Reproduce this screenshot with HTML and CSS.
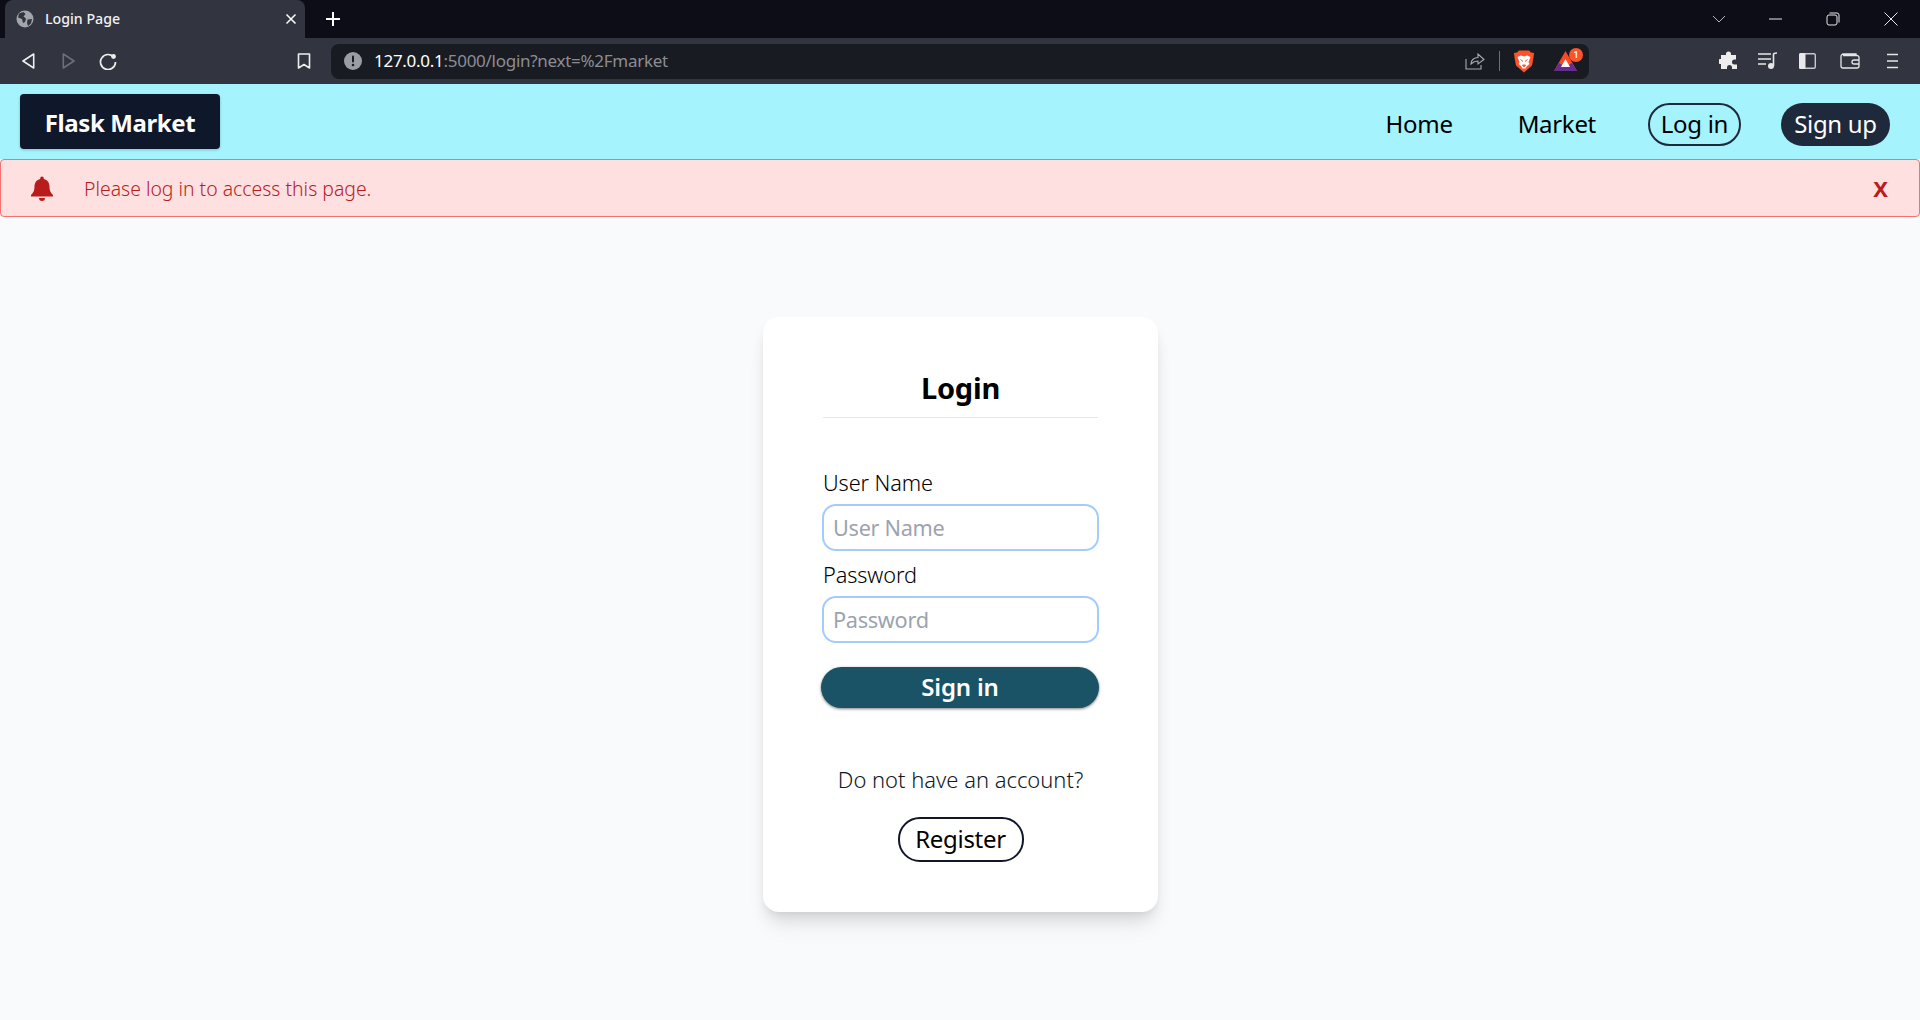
FILE: index.html
```html
<!DOCTYPE html>
<html lang="en">
<head>
<meta charset="utf-8">
<title>Login Page</title>
<link rel="stylesheet" href="styles.css">
</head>
<body>
<div class="chrome">
  <div class="tabstrip">
    <div class="tab">
      <svg class="tab-globe" width="18" height="18" viewBox="0 0 18 18"><circle cx="9" cy="9" r="8.5" fill="#a3a5ad"/><path d="M3 3.500 7.500 2l2 2-2 2.500 2.500 2-1 3.500-2 1-1-4L2 7.500zM11.500 9.500l4.500-.5-1 4.500-3 2.500-1-3z" fill="#32343f"/></svg>
      <span class="tab-title">Login Page</span>
      <svg class="tab-close" width="12" height="12" viewBox="0 0 12 12"><path d="M1.500 1.500l9 9m0-9-9 9" stroke="#fff" stroke-width="1.500"/></svg>
    </div>
    <svg class="new-tab" width="16" height="16" viewBox="0 0 16 16"><path d="M8 1v14M1 8h14" stroke="#fff" stroke-width="2"/></svg>
    <div class="window-controls">
      <svg class="wc-chevron" width="14" height="8" viewBox="0 0 14 8"><path d="M1 1l6 6 6-6" fill="none" stroke="#b5b6bc" stroke-width="1"/></svg>
      <svg class="wc-min" width="14" height="2" viewBox="0 0 14 2"><path d="M0 1h13" stroke="#e8e8ea" stroke-width="1"/></svg>
      <svg class="wc-max" width="14" height="14" viewBox="0 0 14 14"><rect x="1" y="3" width="10" height="10" rx="2" fill="none" stroke="#e8e8ea"/><path d="M3.500 1H11a2 2 0 0 1 2 2v7.500" fill="none" stroke="#e8e8ea"/></svg>
      <svg class="wc-close" width="14" height="14" viewBox="0 0 14 14"><path d="M.5.5l13 13m0-13-13 13" stroke="#e8e8ea" stroke-width="1"/></svg>
    </div>
  </div>
  <div class="toolbar">
    <svg class="tb-back" width="13" height="16" viewBox="0 0 13 16"><path d="M11.700 1 1 8l10.700 7z" fill="none" stroke="#eee" stroke-width="1.600" stroke-linejoin="round"/></svg>
    <svg class="tb-forward" width="13" height="16" viewBox="0 0 13 16"><path d="M1.300 1 12 8 1.300 15z" fill="none" stroke="#6d6f78" stroke-width="1.600" stroke-linejoin="round"/></svg>
    <svg class="tb-reload" width="18" height="18" viewBox="0 0 18 18"><path d="M15 5.500A7.500 7.500 0 1 0 16.500 10" fill="none" stroke="#eee" stroke-width="1.700"/><circle cx="14.500" cy="4.500" r="2.400" fill="#eee"/></svg>
    <svg class="tb-bookmark" width="14" height="16" viewBox="0 0 14 16"><path d="M1.500 1h11v14L7 11.500 1.500 15z" fill="none" stroke="#eee" stroke-width="1.600" stroke-linejoin="round"/></svg>
    <div class="omnibox">
      <svg class="omni-info" width="18" height="18" viewBox="0 0 18 18"><circle cx="9" cy="9" r="9" fill="#9b9da5"/><rect x="8" y="3.500" width="2" height="7" rx="1" fill="#1a1c23"/><circle cx="9" cy="13" r="1.300" fill="#1a1c23"/></svg>
      <span class="url"><span class="url-host">127.0.0.1</span>:5000/login?next=%2Fmarket</span>
      <svg class="omni-share" width="20" height="20" viewBox="0 0 20 20"><path d="M1 8v10h15v-4M6 13c0-4 3-6.500 7-6.500V3l6 5.500L13 13V10c-3 0-5 1-7 3z" fill="none" stroke="#a9aab0" stroke-width="1.100"/></svg>
      <span class="omni-sep"></span>
      <svg class="omni-brave" width="20" height="23" viewBox="0 0 20 23"><path d="M5 .5h10l2 2 3 .5-.5 4.500-1.500 8-8 7-8-7-1.500-8L0 3l3-.5z" fill="#fb542b"/><path d="M3.500 7l3.500-1.500 3 1 3-1L16.500 7l-2 5 1 2-2.500 2-1.500 2.500h-3L7 16l-2.500-2 1-2z" fill="#fff"/><path d="M6.500 9.500l2.500 2M13.500 9.500l-2.500 2M8.500 15h3L10 17z" stroke="#fb542b" fill="#fb542b"/></svg>
      <div class="omni-rewards">
        <svg width="23" height="20" viewBox="0 0 23 20"><path d="M11.500 0 23 20H0z" fill="#ff4724"/><path d="M0 20 5 12l6.500 4 6.500-4 5 8z" fill="#662d91"/><path d="M11.500 8l4.500 8H7z" fill="#fff"/></svg>
        <span class="rewards-badge">1</span>
      </div>
    </div>
    <svg class="tb-puzzle" width="20" height="20" viewBox="0 0 20 20"><path d="M7 3a2.500 2.500 0 0 1 5 0v1h5v4.500h-1.500a2.500 2.500 0 0 0 0 5H18V18h-5v-1.500a2.500 2.500 0 0 0-5 0V18H2v-5H1a2.500 2.500 0 0 1 0-5h1V4h5z" fill="#eee"/></svg>
    <svg class="tb-media" width="20" height="18" viewBox="0 0 20 18"><path d="M0 2h13M0 7h13M0 12h8" stroke="#e6e6e8" stroke-width="1.600"/><path d="M15.500 14V2.500c0-1 1-1.500 3.500-1.500" fill="none" stroke="#e6e6e8" stroke-width="1.600"/><circle cx="13" cy="14" r="3" fill="#e6e6e8"/></svg>
    <svg class="tb-sidebar" width="17" height="16" viewBox="0 0 17 16"><rect x=".7" y=".7" width="15.600" height="14.600" rx="1.500" fill="none" stroke="#c9cacd" stroke-width="1.400"/><rect x="0" y="0" width="6.500" height="16" rx="1.500" fill="#e9e9eb"/></svg>
    <svg class="tb-wallet" width="20" height="16" viewBox="0 0 20 16"><path d="M16 2.500V1H3.500A2.500 2.500 0 0 0 1 3.500V13a2 2 0 0 0 2 2h14a2 2 0 0 0 2-2V4.500a2 2 0 0 0-2-2H3" fill="none" stroke="#e6e6e8" stroke-width="1.300"/><path d="M19 7h-5a2 2 0 0 0 0 4h5" fill="none" stroke="#e6e6e8" stroke-width="1.300"/></svg>
    <svg class="tb-menu" width="12" height="16" viewBox="0 0 12 16"><path d="M0 1.500h11M0 8h11M0 14.500h11" stroke="#e6e6e8" stroke-width="1.500"/></svg>
  </div>
</div>

<nav class="navbar">
  <a class="brand">Flask Market</a>
  <div class="nav-links">
    <a class="nav-link nav-home">Home</a>
    <a class="nav-link nav-market">Market</a>
    <a class="pill pill-outline">Log in</a>
    <a class="pill pill-solid">Sign up</a>
  </div>
</nav>

<div class="alert">
  <svg class="alert-bell" width="24" height="26" viewBox="0 0 24 26"><path d="M12 1.500a1.800 1.800 0 0 1 1.800 1.800v.6c3.800.9 5.700 3.900 5.700 7.600 0 4.500 1.500 6.500 3.500 8.500v1.500H1V20c2-2 3.500-4 3.500-8.500 0-3.700 1.900-6.700 5.700-7.600v-.6A1.800 1.800 0 0 1 12 1.500zM9 23h6a3 3 0 0 1-6 0z" fill="#b91c1c"/></svg>
  <span class="alert-text">Please log in to access this page.</span>
  <span class="alert-close">X</span>
</div>

<main class="page">
  <section class="card">
    <h1 class="card-title">Login</h1>
    <form class="form">
      <label class="field-label" for="username">User Name</label>
      <input class="field-input" id="username" type="text" placeholder="User Name">
      <label class="field-label" for="password">Password</label>
      <input class="field-input" id="password" type="password" placeholder="Password">
      <button class="submit" type="button">Sign in</button>
    </form>
    <p class="prompt">Do not have an account?</p>
    <a class="register">Register</a>
  </section>
</main>
</body>
</html>
```

FILE: styles.css
```css
* { box-sizing: border-box; }
html, body { margin: 0; height: 100%; }
body {
  display: flex;
  flex-direction: column;
  height: 1020px;
  overflow: hidden;
  background: #f9fafb;
  font-family: "Noto Sans", "Open Sans", sans-serif;
  color: #000;
}
svg { display: block; flex: none; }

/* Browser chrome */
.chrome { flex: none; }
.tabstrip {
  display: flex;
  align-items: center;
  height: 38px;
  background: #0c0d17;
  padding-left: 5px;
}
.tab {
  display: flex;
  align-items: center;
  width: 300px;
  height: 38px;
  padding: 0 0 0 11px;
  background: #32343f;
  border-radius: 8px 8px 0 0;
}
.tab-title {
  flex: 1;
  margin-left: 11px;
  padding-bottom: 2px;
  font-size: 14.200px;
  font-weight: 500;
  color: #f1f1f3;
}
.tab-close { margin-right: 8px; }
.new-tab { margin-left: 20px; }
.window-controls { margin-left: auto; display: flex; align-items: center; }
.wc-chevron { margin-right: 43px; }
.wc-min { margin-right: 43px; }
.wc-max { margin-right: 44px; }
.wc-close { margin-right: 22px; }

.toolbar {
  display: flex;
  align-items: center;
  height: 46px;
  background: #32343f;
  padding-left: 22px;
}
.tb-forward { margin-left: 27px; }
.tb-reload { margin-left: 24px; }
.tb-bookmark { margin-left: 180px; }
.omnibox {
  display: flex;
  align-items: center;
  width: 1258px;
  height: 35px;
  margin-left: 20px;
  padding-left: 13px;
  background: #191b22;
  border-radius: 8px;
}
.url {
  margin-left: 12px;
  padding-bottom: 2px;
  font-size: 17px;
  letter-spacing: -0.28px;
  color: #8c8d93;
}
.url-host { color: #fff; }
.omni-share { margin-left: auto; }
.omni-sep { width: 1px; height: 20px; margin-left: 14px; background: #6f7076; }
.omni-brave { margin-left: 14px; }
.omni-rewards { position: relative; margin-left: 20px; margin-right: 12px; }
.rewards-badge {
  position: absolute;
  top: -3px;
  right: -6px;
  width: 14px;
  height: 14px;
  border-radius: 50%;
  background: #fb542b;
  color: #fff;
  font: 500 9px/14px "Roboto", sans-serif;
  text-align: center;
}
.tb-puzzle { margin-left: 130px; }
.tb-media { margin-left: 19px; }
.tb-sidebar { margin-left: 21px; }
.tb-wallet { margin-left: 24px; }
.tb-menu { margin-left: 27px; }

/* Navbar */
.navbar {
  flex: none;
  display: flex;
  align-items: center;
  justify-content: space-between;
  height: 75px;
  padding: 0 30px 0 20px;
  background: #a5f3fc;
}
.brand {
  display: flex;
  align-items: center;
  justify-content: center;
  width: 200px;
  height: 55px;
  padding-top: 2px;
  border-radius: 4px;
  background: #0f172a;
  color: #fff;
  font-size: 24px;
  font-weight: 700;
  letter-spacing: -0.4px;
  box-shadow: 0 1px 3px rgba(0,0,0,.2);
}
.nav-links { display: flex; align-items: center; margin-top: 6px; }
.nav-link { padding-bottom: 2px; font-size: 24px; letter-spacing: -0.3px; }
.nav-home { margin-right: 65px; }
.nav-market { margin-right: 52px; }
.pill {
  display: flex;
  align-items: center;
  justify-content: center;
  height: 43px;
  padding-bottom: 2px;
  border-radius: 22px;
  font-size: 24px;
  letter-spacing: -0.3px;
}
.pill-outline {
  width: 93px;
  border: 2px solid #1e293b;
  margin-right: 40px;
}
.pill-solid {
  width: 109px;
  background: #1e293b;
  color: #fff;
}

/* Alert */
.alert {
  flex: none;
  display: flex;
  align-items: center;
  height: 58px;
  padding: 0 31px 0 29px;
  background: #fee0e1;
  border: 1px solid #f87171;
  border-radius: 4px;
  color: #b91c1c;
}
.alert-text { margin-left: 30px; padding-top: 1px; font-size: 19.400px; font-weight: 300; }
.alert-close { margin-left: auto; font-size: 22px; font-weight: 700; }

/* Login card */
.page { flex: 1; display: flex; justify-content: center; padding: 100px 0 0 1px; }
.card {
  display: flex;
  flex-direction: column;
  align-items: center;
  width: 395px;
  height: 595px;
  padding: 49px 60px 0;
  background: #fff;
  border-radius: 16px;
  box-shadow: 0 10px 15px -3px rgba(0,0,0,.1), 0 4px 6px -2px rgba(0,0,0,.05), 0 20px 25px -5px rgba(0,0,0,.05);
}
.card-title {
  align-self: stretch;
  margin: 0;
  height: 52px;
  padding-top: 2px;
  border-bottom: 1px solid #e5e7eb;
  font-size: 29px;
  font-weight: 700;
  line-height: 40px;
  text-align: center;
  letter-spacing: -0.2px;
}
.form { align-self: stretch; display: flex; flex-direction: column; }
.field-label {
  height: 28px;
  font-size: 21.700px;
  font-weight: 300;
  line-height: 28px;
  letter-spacing: -0.1px;
  color: #000;
}
.field-label:first-child { margin-top: 51px; }
.field-input {
  width: 277px;
  height: 47px;
  margin: 7px 0 10px -1px;
  padding: 0 9px;
  background: #fff;
  border: 2px solid #a3ccfd;
  border-radius: 14px;
  font: inherit;
  font-size: 21.700px;
  font-weight: 400;
  letter-spacing: -0.3px;
  outline: none;
}
.field-input::placeholder { color: #9ca3af; opacity: 1; }
.submit {
  width: 278px;
  height: 41px;
  margin: 14px 0 0 -2px;
  padding: 0 0 3px;
  border: 0;
  border-radius: 21px;
  background: #1a5266;
  color: #fff;
  font: inherit;
  font-size: 24px;
  font-weight: 600;
  letter-spacing: -0.2px;
  box-shadow: 0 1px 3px rgba(0,0,0,.5);
}
.prompt {
  margin: 54px 0 0;
  font-size: 21.950px;
  font-weight: 300;
  line-height: 36px;
  color: #111827;
  text-align: center;
}
.register {
  display: flex;
  align-items: center;
  justify-content: center;
  width: 126px;
  height: 45px;
  margin-top: 19px;
  padding-bottom: 2px;
  border: 2px solid #0f172a;
  border-radius: 22px;
  font-size: 24px;
  letter-spacing: -0.3px;
}
```
